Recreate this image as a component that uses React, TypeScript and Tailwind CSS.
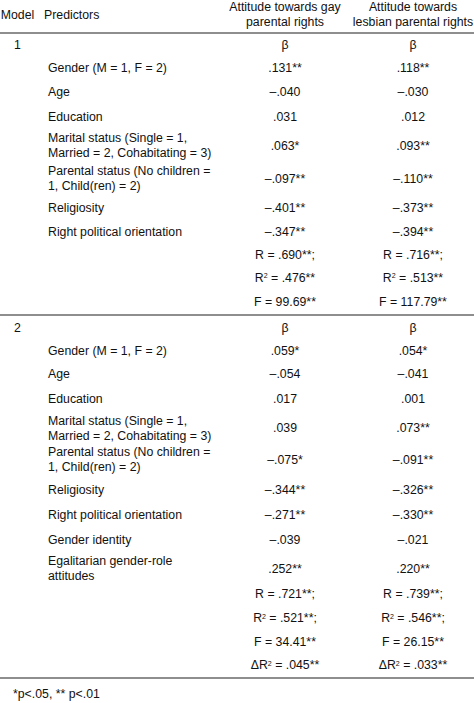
import type { ReactNode } from "react";

type Row = {
  h: number;
  model?: string;
  label?: ReactNode;
  a: ReactNode;
  b: ReactNode;
};

const R2 = ({ d }: { d?: boolean }) => (
  <>
    {d ? "Δ" : ""}R<sup className="text-[7px]">2</sup>
  </>
);

const model1: Row[] = [
  { h: 23, model: "1", a: "β", b: "β" },
  { h: 23, label: "Gender (M = 1, F = 2)", a: ".131**", b: ".118**" },
  { h: 24, label: "Age", a: "–.040", b: "–.030" },
  { h: 26, label: "Education", a: ".031", b: ".012" },
  { h: 32, label: "Marital status (Single = 1, Married = 2, Cohabitating = 3)", a: ".063*", b: ".093**" },
  { h: 34, label: "Parental status (No children = 1, Child(ren) = 2)", a: "–.097**", b: "–.110**" },
  { h: 25, label: "Religiosity", a: "–.401**", b: "–.373**" },
  { h: 23, label: "Right political orientation", a: "–.347**", b: "–.394**" },
  { h: 22, a: "R = .690**;", b: "R = .716**;" },
  { h: 24, a: <><R2 /> = .476**</>, b: <><R2 /> = .513**</> },
  { h: 24, a: "F = 99.69**", b: "F = 117.79**" },
];

const model2: Row[] = [
  { h: 24, model: "2", a: "β", b: "β" },
  { h: 23, label: "Gender (M = 1, F = 2)", a: ".059*", b: ".054*" },
  { h: 23, label: "Age", a: "–.054", b: "–.041" },
  { h: 27, label: "Education", a: ".017", b: ".001" },
  { h: 31, label: "Marital status (Single = 1, Married = 2, Cohabitating = 3)", a: ".039", b: ".073**" },
  { h: 32, label: "Parental status (No children = 1, Child(ren) = 2)", a: "–.075*", b: "–.091**" },
  { h: 28, label: "Religiosity", a: "–.344**", b: "–.326**" },
  { h: 23, label: "Right political orientation", a: "–.271**", b: "–.330**" },
  { h: 27, label: "Gender identity", a: "–.039", b: "–.021" },
  { h: 28, label: "Egalitarian gender-role attitudes", a: ".252**", b: ".220**" },
  { h: 25, a: "R = .721**;", b: "R = .739**;" },
  { h: 23, a: <><R2 /> = .521**;</>, b: <><R2 /> = .546**;</> },
  { h: 24, a: "F = 34.41**", b: "F = 26.15**" },
  { h: 23, a: <><R2 d /> = .045**</>, b: <><R2 d /> = .033**</> },
];

const grid = "grid grid-cols-[35px_183px_134px_122px] items-center";

function Rows({ rows }: { rows: Row[] }) {
  return (
    <>
      {rows.map((r, i) => (
        <div key={i} className={grid} style={{ height: r.h }}>
          <div className="text-center">{r.model}</div>
          <div className="pl-[13px] pr-[1px]">{r.label}</div>
          <div className="text-center whitespace-nowrap">{r.a}</div>
          <div className="text-center whitespace-nowrap">{r.b}</div>
        </div>
      ))}
    </>
  );
}

const Rule = () => <div className="h-[2px] bg-[#8e8e8e]" />;

export default function App() {
  return (
    <div className="w-[474px] h-[703px] overflow-hidden bg-white text-[#111] text-[12.3px] leading-[15px] font-['Liberation_Sans',Arial,sans-serif]">
      {/* header */}
      <div className={grid + " h-[32px] pb-[2px]"}>
        <div className="text-center">Model</div>
        <div className="pl-[9px]">Predictors</div>
        <div className="text-center whitespace-nowrap">
          Attitude towards gay
          <br />
          parental rights
        </div>
        <div className="text-center whitespace-nowrap">
          Attitude towards
          <br />
          lesbian parental rights
        </div>
      </div>
      <Rule />
      <Rows rows={model1} />
      <Rule />
      <Rows rows={model2} />
      <Rule />
      <div className="pl-[13px] pt-[8px]">*p&lt;.05, ** p&lt;.01</div>
    </div>
  );
}
